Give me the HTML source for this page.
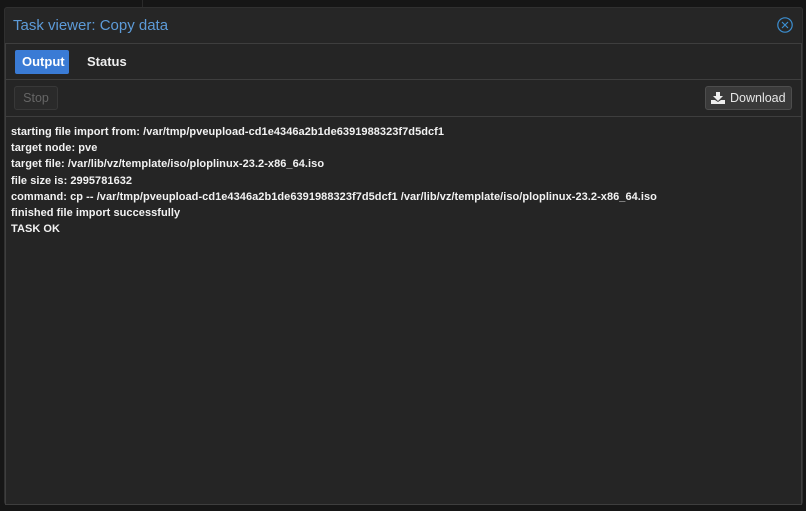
<!DOCTYPE html>
<html><head><style>
*{margin:0;padding:0;box-sizing:border-box}
body{width:806px;height:511px;background:#161616;overflow:hidden;font-family:"Liberation Sans",sans-serif;position:relative}
.bgline{position:absolute;left:142px;top:0;width:1px;height:8px;background:#2a2a2a}
.win{position:absolute;left:4px;top:7px;width:799px;height:498px;background:#262626;border-radius:3px;border:1px solid #303030}
.title{position:absolute;left:8px;top:9px;color:#5d9bd8;font-size:15px}
.close{position:absolute;right:9px;top:9px}
.panel{position:absolute;left:0px;top:35px;width:797px;height:462px;border:1px solid #3e3e3e;background:#252525}
.tabs{height:36px;border-bottom:1px solid #3e3e3e;position:relative}
.tab{position:absolute;top:6px;height:24px;line-height:24px;font-size:13px;font-weight:bold;color:#eee;padding:0 7px;border-radius:2px}
.tab.on{left:9px;width:54px;background:#3a7bd5;color:#fff}
.tool{height:37px;border-bottom:1px solid #3e3e3e;position:relative}
.btn{position:absolute;top:6px;height:24px;border:1px solid #444;border-radius:3px;font-size:12.5px;line-height:22px}
.stop{left:8px;width:44px;text-align:center;color:#666;background:#2a2a2a;border-color:#383838}
.dl{right:9px;width:87px;background:#3a3a3a;color:#e6e6e6;padding-left:24px;border-color:#4d4d4d}
.log{padding:7px 5px;color:#f2f2f2;font-size:11px;font-weight:bold;line-height:16.2px;letter-spacing:0.05px;white-space:pre}
</style></head><body>
<div class="bgline"></div>
<div class="win">
<div class="title">Task viewer: Copy data</div>
<svg class="close" width="16" height="16" viewBox="0 0 16 16"><circle cx="8" cy="8" r="7.2" fill="none" stroke="#3c8ed0" stroke-width="1.2"/><path d="M5 5L11 11M11 5L5 11" stroke="#3c8ed0" stroke-width="1.2"/></svg>
<div class="panel">
<div class="tabs"><div class="tab on">Output</div><div class="tab" style="left:74px">Status</div></div>
<div class="tool"><div class="btn stop">Stop</div>
<div class="btn dl"><svg style="position:absolute;left:5px;top:5px" width="14" height="12" viewBox="0 0 14 12"><path d="M5 0h4v4h3l-5 5-5-5h3z" fill="#eee"/><path d="M0 8h4l3 2 3-2h4v4H0z" fill="#eee"/></svg>Download</div></div>
<div class="log">starting file import from: /var/tmp/pveupload-cd1e4346a2b1de6391988323f7d5dcf1
target node: pve
target file: /var/lib/vz/template/iso/ploplinux-23.2-x86_64.iso
file size is: 2995781632
command: cp -- /var/tmp/pveupload-cd1e4346a2b1de6391988323f7d5dcf1 /var/lib/vz/template/iso/ploplinux-23.2-x86_64.iso
finished file import successfully
TASK OK</div>
</div>
</div>
</body></html>
